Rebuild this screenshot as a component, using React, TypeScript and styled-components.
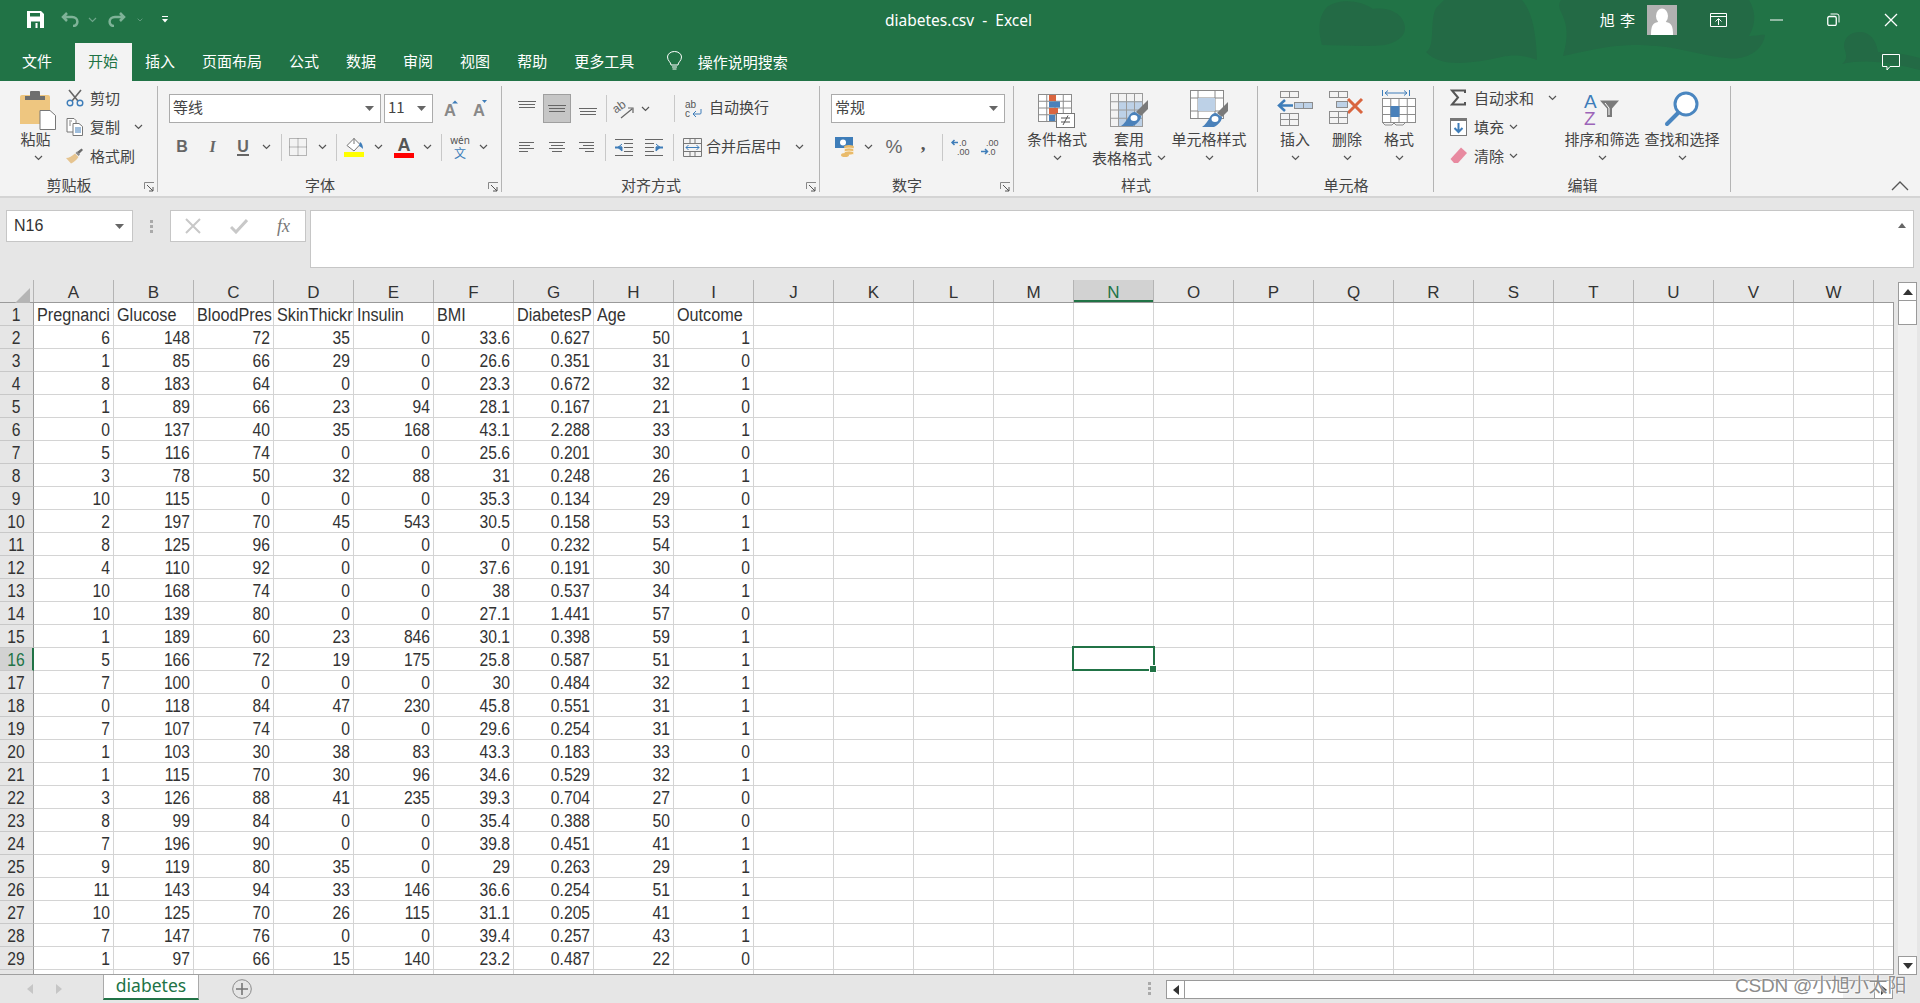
import styled, { createGlobalStyle } from "styled-components";

const Global = createGlobalStyle`
	html, body { margin: 0; padding: 0; background: #e6e6e6; }
	body { width: 1920px; height: 1003px; overflow: hidden; font-family: "Noto Sans CJK SC", "Noto Sans", sans-serif; }
	* { box-sizing: border-box; }
`;

const CELL_FONT = `"Liberation Sans", "Noto Sans CJK SC", sans-serif`;
const COLS = ["A","B","C","D","E","F","G","H","I","J","K","L","M","N","O","P","Q","R","S","T","U","V","W"];
const HEAD = ["Pregnanci","Glucose","BloodPres","SkinThickr","Insulin","BMI","DiabetesP","Age","Outcome"];
const DATA = [
	"6 148 72 35 0 33.6 0.627 50 1","1 85 66 29 0 26.6 0.351 31 0","8 183 64 0 0 23.3 0.672 32 1",
	"1 89 66 23 94 28.1 0.167 21 0","0 137 40 35 168 43.1 2.288 33 1","5 116 74 0 0 25.6 0.201 30 0",
	"3 78 50 32 88 31 0.248 26 1","10 115 0 0 0 35.3 0.134 29 0","2 197 70 45 543 30.5 0.158 53 1",
	"8 125 96 0 0 0 0.232 54 1","4 110 92 0 0 37.6 0.191 30 0","10 168 74 0 0 38 0.537 34 1",
	"10 139 80 0 0 27.1 1.441 57 0","1 189 60 23 846 30.1 0.398 59 1","5 166 72 19 175 25.8 0.587 51 1",
	"7 100 0 0 0 30 0.484 32 1","0 118 84 47 230 45.8 0.551 31 1","7 107 74 0 0 29.6 0.254 31 1",
	"1 103 30 38 83 43.3 0.183 33 0","1 115 70 30 96 34.6 0.529 32 1","3 126 88 41 235 39.3 0.704 27 0",
	"8 99 84 0 0 35.4 0.388 50 0","7 196 90 0 0 39.8 0.451 41 1","9 119 80 35 0 29 0.263 29 1",
	"11 143 94 33 146 36.6 0.254 51 1","10 125 70 26 115 31.1 0.205 41 1","7 147 76 0 0 39.4 0.257 43 1",
	"1 97 66 15 140 23.2 0.487 22 0",
].map((r) => r.split(" "));

function Chevron({ color = "#555" }: { color?: string }) {
	return (
		<svg width="9" height="6" viewBox="0 0 9 6"><path d="M1 1l3.5 3.5L8 1" fill="none" stroke={color} strokeWidth="1.2" /></svg>
	);
}

function Caret() {
	return <svg width="9" height="5" viewBox="0 0 9 5"><path d="M0 0h9L4.5 5z" fill="#666" /></svg>;
}

function Launcher() {
	return (
		<svg width="11" height="11" viewBox="0 0 11 11">
			<path d="M.5 7V.5H10" fill="none" stroke="#888" />
			<path d="M3 3l6 6M9 5v4H5" fill="none" stroke="#555" />
		</svg>
	);
}

function GridLines({ x, y, w, h, cols, rows, color = "#8c8c8c" }: { x: number; y: number; w: number; h: number; cols: number; rows: number; color?: string }) {
	let d = "";
	for (let i = 1; i < cols; i++) d += `M${x + (w * i) / cols} ${y}v${h}`;
	for (let i = 1; i < rows; i++) d += `M${x} ${y + (h * i) / rows}h${w}`;
	return (
		<>
			<rect x={x} y={y} width={w} height={h} fill="none" stroke={color} />
			<path d={d} stroke={color} strokeWidth="1" fill="none" />
		</>
	);
}

function Brush() {
	return (
		<>
			<path d="M39 6l-12 12 5 4 7-7z" fill="#7a7a7a" />
			<path d="M26 18c-3 0-5 2-6 4-2 4-5 8-8 10h12c4-2 8-6 8-10z" fill="#4a81ba" />
			<ellipse cx="25" cy="24" rx="3.5" ry="3" fill="#fff" />
		</>
	);
}

function IconPaste() {
	return (
		<svg width="38" height="40" viewBox="0 0 38 40">
			<path d="M2 5h26a2 2 0 0 1 2 2v27H0V7a2 2 0 0 1 2-2z" fill="#eec680" />
			<path d="M5 6h5V2a1 1 0 0 1 1-1h8a1 1 0 0 1 1 1v4h5v4H5z" fill="#6f6f6f" />
			<path d="M20 20.500h10l5.500 5v14H20z" fill="#fff" stroke="#777" />
		</svg>
	);
}
function IconCut() {
	return (
		<svg width="18" height="18" viewBox="0 0 18 18">
			<path d="M3 1l9 11M15 1L6 12" stroke="#666" strokeWidth="1.6" fill="none" />
			<circle cx="4" cy="14" r="2.800" fill="none" stroke="#3e7db9" strokeWidth="1.400" />
			<circle cx="14" cy="14" r="2.800" fill="none" stroke="#3e7db9" strokeWidth="1.400" />
		</svg>
	);
}
function IconCopy() {
	return (
		<svg width="18" height="18" viewBox="0 0 18 18">
			<path d="M1 .5h7l2 2V14H1z" fill="#fff" stroke="#777" />
			<path d="M7 5.500h6l3.500 3v9H7z" fill="#fff" stroke="#777" />
			<path d="M9 10h6M9 12h6M9 14h6" stroke="#3e7db9" />
			<path d="M3 3h3M3 5h2M3 7h2" stroke="#888" />
		</svg>
	);
}
function IconFormatBrush() {
	return (
		<svg width="18" height="16" viewBox="0 0 18 16">
			<path d="M17 2l-1.500-1.500L11 4l2 2z" fill="#6b6b6b" />
			<path d="M11 3.500l3 3-1.500 1.500-3-3z" fill="#8a8a8a" />
			<path d="M9 5.500l3.500 3.500c-2 3-5 5.500-7.500 6.500L0 10c3 0 6-2 9-4.500z" fill="#e6c48f" />
		</svg>
	);
}
function IconBorders() {
	return (
		<svg width="18" height="18" viewBox="0 0 18 18">
			<path d="M.5.500h17v17H.500zM9 .500v17M.5 9h17" fill="none" stroke="#777" strokeDasharray="1 1" />
		</svg>
	);
}
function IconFill() {
	return (
		<svg width="20" height="20" viewBox="0 0 20 20">
			<path d="M3 8.500L10 1.500l6 6-6 6.500z" fill="#fff" stroke="#777" />
			<path d="M10 1v6" stroke="#777" />
			<path d="M16 5c2 1 3 4 3 7-1-1-2-2-4-3z" fill="#3e7db9" />
			<rect y="15" width="20" height="5" fill="#ffff00" />
		</svg>
	);
}
function IconFontSize({ up }: { up?: boolean }) {
	return (
		<IconSvg width="20" height="18" viewBox="0 0 20 18">
			<text x={up ? 6 : 5} y="15.500" fontSize="16.500" fontWeight="700" fontFamily="Liberation Sans, sans-serif" fill="#888">A</text>
			{up ? <path d="M14 3.500l3-3 3 3z" fill="#3e7db9" /> : <path d="M14 0h5l-2.500 3z" fill="#3e7db9" />}
		</IconSvg>
	);
}
function IconAlignV({ top }: { top: number }) {
	return (
		<svg width="18" height="18" viewBox="0 0 18 18">
			<path d={`M0 ${top}.5h18M1 ${top + 3}.5h16M1 ${top + 6}.5h16`} stroke="#666" />
		</svg>
	);
}
function IconAlignH({ mode }: { mode: "l" | "c" | "r" }) {
	const xs = mode === "l" ? [0, 0, 0, 0] : mode === "c" ? [0, 2, 0, 3] : [0, 4, 0, 6];
	const ws = mode === "c" ? [16, 12, 16, 10] : [15, 11, 15, 9];
	return (
		<svg width="16" height="12" viewBox="0 0 16 12">
			{[0, 1, 2, 3].map((i) => <path key={i} d={`M${xs[i]} ${i * 3 + 1}.5h${ws[i]}`} stroke="#666" />)}
		</svg>
	);
}
function IconIndent({ flip }: { flip?: boolean }) {
	return (
		<svg width="18" height="17" viewBox="0 0 18 17" style={flip ? { transform: "scaleX(-1)" } : undefined}>
			<path d="M0 .500h18M9 4.500h9M9 8.500h9M9 12.500h9M0 16.500h18" stroke="#666" />
			<path d="M7 5L3 8.500 7 12V9.500h-0V8H3" fill="#3e7db9" stroke="#3e7db9" />
			<path d="M0 8.500h7" stroke="#3e7db9" strokeWidth="2" />
		</svg>
	);
}
function IconOrient() {
	return (
		<IconSvg width="22" height="22" viewBox="0 0 22 22">
			<text x="1" y="12" fontSize="12" fontFamily="Liberation Sans, sans-serif" fill="#666" transform="rotate(-35 8 11)">ab</text>
			<path d="M8 20l11-9M15 10h5v5" fill="none" stroke="#666" strokeWidth="1.200" />
		</IconSvg>
	);
}
function IconWrap() {
	return (
		<IconSvg width="18" height="18" viewBox="0 0 18 18">
			<text x="0" y="8" fontSize="10" fontFamily="Liberation Sans, sans-serif" fill="#555">ab</text>
			<text x="0" y="17" fontSize="10" fontFamily="Liberation Sans, sans-serif" fill="#555">c</text>
			<path d="M16 9v4a1 1 0 0 1-1 1H8M11 11l-3 3 3 3" fill="none" stroke="#3e7db9" />
		</IconSvg>
	);
}
function IconMerge() {
	return (
		<svg width="19" height="19" viewBox="0 0 19 19">
			<path d="M.5.500h18v18H.500zM.5 5.500h18M.5 13.500h18M7 .500v5M12 .500v5M7 13.500v5M12 13.500v5" fill="none" stroke="#777" />
			<path d="M3 9.500h13M5.500 7L3 9.500 5.500 12M13.500 7L16 9.500 13.500 12" fill="none" stroke="#3e7db9" />
		</svg>
	);
}
function IconCurrency() {
	return (
		<svg width="20" height="20" viewBox="0 0 20 20">
			<rect x="0" y="0" width="18" height="11" fill="#3e7db9" />
			<circle cx="8" cy="5.500" r="3" fill="#fff" />
			<ellipse cx="14" cy="10" rx="5" ry="2" fill="#e9bb6b" />
			<ellipse cx="14" cy="13" rx="5" ry="2" fill="#e9bb6b" stroke="#fff" strokeWidth=".6" />
			<ellipse cx="14" cy="16" rx="5" ry="2" fill="#e9bb6b" stroke="#fff" strokeWidth=".6" />
			<ellipse cx="10" cy="18" rx="4" ry="2" fill="#e9bb6b" />
		</svg>
	);
}
function IconDecimal({ more }: { more?: boolean }) {
	const f = { fontSize: 9, fontFamily: "Liberation Sans, sans-serif", fill: "#555" };
	return (
		<IconSvg width="18" height="18" viewBox="0 0 18 18">
			<text x={more ? 5 : 7} y="8" {...f}>{more ? ".00" : ".0"}</text>
			<text x={more ? 7 : 5} y="17" {...f}>{more ? ".0" : ".00"}</text>
			{more ? <path d="M0 13.500h6M4 11l2.500 2.500L4 16" stroke="#3e7db9" strokeWidth="1.500" fill="none" /> : <path d="M0 4.500h6M2.500 2L0 4.500 2.500 7" stroke="#3e7db9" strokeWidth="1.500" fill="none" />}
		</IconSvg>
	);
}
function IconConditional() {
	return (
		<svg width="38" height="35" viewBox="0 0 38 35">
			<rect x=".5" y=".5" width="33" height="27" fill="#fff" />
			<GridLines x={0.5} y={0.5} w={33} h={27} cols={4} rows={4} />
			<rect x="11" y="1" width="7" height="6" fill="#d9653f" />
			<rect x="11" y="7.500" width="11" height="6" fill="#4a81ba" />
			<rect x="11" y="14" width="9" height="6" fill="#d9653f" />
			<rect x="11" y="21" width="6" height="6" fill="#4a81ba" />
			<rect x="18.500" y="19.500" width="18" height="14" fill="#fff" stroke="#777" />
			<path d="M23 24h9M23 28h9M30 21.500L25 31" stroke="#555" />
		</svg>
	);
}
function IconTableFormat() {
	return (
		<svg width="38" height="35" viewBox="0 0 38 35">
			<rect x="8" y="8" width="25" height="25" fill="#bdd1e7" />
			<GridLines x={0.5} y={0.5} w={32} h={33} cols={4} rows={4} color="#9a9a9a" />
			<g transform="translate(-1 1)"><Brush /></g>
		</svg>
	);
}
function IconCellStyle() {
	return (
		<svg width="38" height="38" viewBox="0 0 38 38">
			<rect x=".5" y=".5" width="33" height="28" fill="#fff" stroke="#888" />
			<path d="M8 .5v28M25 .5v28M.5 8h33M.5 21h33" stroke="#888" fill="none" />
			<rect x="8" y="8" width="17" height="13" fill="#bdd1e7" />
			<g transform="translate(0 5)"><Brush /></g>
		</svg>
	);
}
function IconInsert() {
	return (
		<svg width="37" height="36" viewBox="0 0 37 36">
			<GridLines x={3.5} y={0.5} w={18} h={6} cols={2} rows={1} />
			<rect x="17.500" y="11.500" width="18" height="6" fill="#bdd1e7" />
			<GridLines x={17.5} y={11.5} w={18} h={6} cols={2} rows={1} />
			<path d="M16 14.500H3M8 9l-6 5.500L8 20" fill="none" stroke="#3e7db9" strokeWidth="2.500" />
			<GridLines x={3.5} y={22.5} w={18} h={12} cols={2} rows={2} />
		</svg>
	);
}
function IconDelete() {
	return (
		<svg width="36" height="33" viewBox="0 0 36 33">
			<GridLines x={0.5} y={0.5} w={18} h={6} cols={2} rows={1} />
			<rect x="7.500" y="10.500" width="11" height="6" fill="#bdd1e7" stroke="#8c8c8c" />
			<path d="M19 8l14 14M33 8L19 22" stroke="#d9653f" strokeWidth="3" />
			<GridLines x={0.5} y={20.5} w={18} h={12} cols={2} rows={2} />
		</svg>
	);
}
function IconFormat() {
	return (
		<svg width="35" height="36" viewBox="0 0 35 36">
			<path d="M.5 0v6M27.500 0v6M3 3h22M6 .500L3 3l3 2.500M22 .500L25 3l-3 2.500" fill="none" stroke="#3e7db9" />
			<rect x=".5" y="8.500" width="33" height="24" fill="#fff" />
			<GridLines x={0.5} y={8.5} w={33} h={24} cols={4} rows={3} />
			<rect x="8.500" y="16" width="9" height="11" fill="#4a81ba" />
			<path d="M1 33l2 2h7l2-2 2 2h7l2-2" fill="none" stroke="#8c8c8c" />
		</svg>
	);
}
function IconSort() {
	return (
		<IconSvg width="36" height="34" viewBox="0 0 36 34">
			<text x="0" y="16" fontSize="19" fontFamily="Liberation Sans, sans-serif" fill="#3e7db9">A</text>
			<text x="0" y="33" fontSize="19" fontFamily="Liberation Sans, sans-serif" fill="#9c64b8">Z</text>
			<path d="M16 8.500h19l-7 8V25h-5v-8.500z" fill="#7a7a7a" />
			<path d="M21 11l4 5v7" fill="none" stroke="#fff" />
		</IconSvg>
	);
}
function IconFind() {
	return (
		<svg width="36" height="36" viewBox="0 0 36 36">
			<circle cx="22" cy="13" r="11" fill="#fff" stroke="#4a86c0" strokeWidth="3" />
			<path d="M14 22L3 33" stroke="#4a86c0" strokeWidth="4" strokeLinecap="round" />
		</svg>
	);
}
function IconSum() {
	return (
		<svg width="16" height="17" viewBox="0 0 16 17">
			<path d="M15 4V1.500H2l6 7-6 7h13V13" fill="none" stroke="#555" strokeWidth="2" />
		</svg>
	);
}
function IconFillDown() {
	return (
		<svg width="17" height="18" viewBox="0 0 17 18">
			<rect x=".5" y=".5" width="16" height="17" fill="#fff" stroke="#777" />
			<rect width="17" height="3" fill="#777" />
			<path d="M8.500 5v9M4.500 10l4 4 4-4" fill="none" stroke="#3e7db9" strokeWidth="2" />
		</svg>
	);
}
function IconEraser() {
	return (
		<svg width="17" height="17" viewBox="0 0 17 17">
			<path d="M11 .5l6 5.500-9 10H4L.5 12z" fill="#e88aa0" />
		</svg>
	);
}

const App = () => (
	<Window>
		<Global />
		<TitleBar>
			<Blobs viewBox="0 0 1920 81" aria-hidden>
				<path fill="#236a45" d="M1322 45c-4-14-4-28 5-38 12-9 34-7 46 2 12-2 30 2 32 18 1 10-10 16-20 18-20 2-42 0-63 0z" />
				<path fill="#236a45" d="M1426 52c10-6 3-30 10-44l8-8h78c12 14 14 38 15 60-20-8-32-4-50 0-24 4-48 6-61-8z" />
				<path fill="#236a45" d="M1563 56c12-40-10-44-2-56h188c6 10 8 22 0 36 6 0 14-2 16-1-2 16-20 26-38 23-26-2-44-10-70-12-32-3-50 0-94 10z" />
				<path fill="#236a45" d="M1842 64c8-6 2-14 2-18 0-8 6-14 16-14 10 0 16 8 18 20 14 0 28 2 42 6v12c-24-6-52-12-78-6z" />
			</Blobs>
			<TopRow>
				<QuickBar>
					<QuickCell $w={36}>
						<svg width="17" height="17" viewBox="0 0 17 17">
							<path d="M0 0h14l3 3v14H0z" fill="#fff" />
							<rect x="3" y="2" width="10" height="3.500" fill="#217346" />
							<rect x="4" y="10.500" width="9" height="6.500" fill="#217346" />
							<rect x="8.500" y="12" width="2" height="5" fill="#fff" />
						</svg>
					</QuickCell>
					<QuickCell $w={34}>
						<svg width="18" height="15" viewBox="0 0 18 15"><path d="M6 1L2 5l4 4M2 5h9c7 0 7 9 1 9" fill="none" stroke="#7fb398" strokeWidth="2.500" /></svg>
					</QuickCell>
					<QuickCell $w={10}><Chevron color="#6ea58a" /></QuickCell>
					<QuickCell $w={40}>
						<svg width="18" height="15" viewBox="0 0 18 15"><path d="M12 1l4 4-4 4M16 5H7c-7 0-7 9-1 9" fill="none" stroke="#7fb398" strokeWidth="2.500" /></svg>
					</QuickCell>
					<QuickCell $w={6}><Chevron color="#6ea58a" /></QuickCell>
					<QuickCell $w={44}>
						<svg width="6" height="7" viewBox="0 0 6 7"><path d="M0 .5h6" stroke="#fff" /><path d="M0 3h6L3 6.500z" fill="#fff" /></svg>
					</QuickCell>
				</QuickBar>
				<DocTitle>diabetes.csv&nbsp; -&nbsp; Excel</DocTitle>
				<Account>
					<UserName>旭 李</UserName>
					<Avatar>
						<svg width="30" height="30" viewBox="0 0 30 30">
							<ellipse cx="15" cy="11" rx="6" ry="7.500" fill="#fff" />
							<path d="M4 30c0-10 2-12 7-13h8c5 1 7 3 7 13z" fill="#fff" />
						</svg>
					</Avatar>
					<WinButton>
						<svg width="17" height="14" viewBox="0 0 17 14">
							<path d="M.5.500h16v13H.500zM.5 3.500h16M8.500 12V6M5.500 8.500l3-3 3 3" fill="none" stroke="#fff" />
						</svg>
					</WinButton>
					<WinButton>
						<svg width="13" height="2" viewBox="0 0 13 2"><path d="M0 1h13" stroke="#fff" /></svg>
					</WinButton>
					<WinButton>
						<svg width="13" height="13" viewBox="0 0 13 13">
							<rect x=".75" y="3.500" width="8.500" height="9" rx="1.500" fill="none" stroke="#fff" strokeWidth="1.300" />
							<path d="M3.500 1h6.500a2 2 0 0 1 2 2v6.500" fill="none" stroke="#fff" />
						</svg>
					</WinButton>
					<WinButton>
						<svg width="14" height="14" viewBox="0 0 14 14"><path d="M1 1l12 12M13 1L1 13" stroke="#fff" strokeWidth="1.300" /></svg>
					</WinButton>
				</Account>
			</TopRow>
			<TabRow>
				<Tab $gap>文件</Tab>
				<Tab $active>开始</Tab>
				<Tab>插入</Tab>
				<Tab>页面布局</Tab>
				<Tab>公式</Tab>
				<Tab>数据</Tab>
				<Tab>审阅</Tab>
				<Tab>视图</Tab>
				<Tab>帮助</Tab>
				<Tab>更多工具</Tab>
				<SearchHint>
					<svg width="15" height="20" viewBox="0 0 15 20">
						<path d="M4 14c0-3-3.500-4-3.500-8a7 5.500 0 0 1 14 0c0 4-3.500 5-3.500 8z" fill="none" stroke="#fff" />
						<path d="M5 16h5M5.500 18h4" stroke="#fff" />
					</svg>
					<span>操作说明搜索</span>
				</SearchHint>
				<CommentButton>
					<svg width="18" height="17" viewBox="0 0 18 17"><path d="M.5.500h17v12H8l-3 3.500v-3.500H.500z" fill="none" stroke="#fff" /></svg>
				</CommentButton>
			</TabRow>
		</TitleBar>

		<Ribbon>
			<Group $w={158}>
				<GroupBody $pl={20}>
					<BigButton $w={37}>
						<BigIcon $pt={5}><IconPaste /></BigIcon>
						<BigLabel $shift={-3}>粘贴</BigLabel>
						<BigChevron><Chevron /></BigChevron>
					</BigButton>
					<SmallColumn $ml={9}>
						<SmallRow><SmallIcon><IconCut /></SmallIcon>剪切</SmallRow>
						<SmallRow><SmallIcon><IconCopy /></SmallIcon>复制<RowChevron $ml={14}><Chevron /></RowChevron></SmallRow>
						<SmallRow><SmallIcon><IconFormatBrush /></SmallIcon>格式刷</SmallRow>
					</SmallColumn>
				</GroupBody>
				<GroupFoot><FootLabel>剪贴板</FootLabel><LauncherCell><Launcher /></LauncherCell></GroupFoot>
			</Group>

			<Group $w={344}>
				<StackedBody $pl={11}>
					<ToolRow>
						<ComboBox $w={212}><ComboText>等线</ComboText><Caret /></ComboBox>
						<ComboBox $w={49} $ml={3}><ComboText>11</ComboText><Caret /></ComboBox>
						<Tool $w={30}><IconFontSize up /></Tool>
						<Tool $w={30}><IconFontSize /></Tool>
					</ToolRow>
					<ToolRowLow $ml={-2}>
						<Tool $w={30}><StyleB>B</StyleB></Tool>
						<Tool $w={31}><StyleI>I</StyleI></Tool>
						<Tool $w={30}><StyleU>U</StyleU></Tool>
						<Tool $w={16}><Chevron /></Tool>
						<ToolSep $ml={7} />
						<Tool $w={32}><IconBorders /></Tool>
						<Tool $w={16}><Chevron /></Tool>
						<ToolSep $ml={6} />
						<Tool $w={33}><IconFill /></Tool>
						<Tool $w={16}><Chevron /></Tool>
						<Tool $w={36}>
							<ColorA>A<ColorLine /></ColorA>
						</Tool>
						<Tool $w={10}><Chevron /></Tool>
						<ToolSep $ml={9} />
						<Tool $w={36}><Phonetic>wén<b>文</b></Phonetic></Tool>
						<Tool $w={10}><Chevron /></Tool>
					</ToolRowLow>
				</StackedBody>
				<GroupFoot><FootLabel>字体</FootLabel><LauncherCell><Launcher /></LauncherCell></GroupFoot>
			</Group>

			<Group $w={318}>
				<StackedBody $pl={11}>
					<ToolRow>
						<Tool $w={28}><IconAlignV top={1} /></Tool>
						<ActiveTool $ml={2}><IconAlignV top={5} /></ActiveTool>
						<Tool $w={30} $ml={2}><IconAlignV top={8} /></Tool>
						<ToolSep $ml={3} />
						<Tool $w={33}><IconOrient /></Tool>
						<Tool $w={10}><Chevron /></Tool>
						<ToolSep $ml={24} />
						<Tool $w={30} $ml={4}><IconWrap /></Tool>
						<ToolText>自动换行</ToolText>
					</ToolRow>
					<ToolRowLow $ml={-1}>
						<Tool $w={30}><IconAlignH mode="l" /></Tool>
						<Tool $w={30}><IconAlignH mode="c" /></Tool>
						<Tool $w={30}><IconAlignH mode="r" /></Tool>
						<ToolSep $ml={3} />
						<Tool $w={36}><IconIndent /></Tool>
						<Tool $w={24}><IconIndent flip /></Tool>
						<ToolSep $ml={7} />
						<Tool $w={28} $ml={4}><IconMerge /></Tool>
						<ToolText>合并后居中</ToolText>
						<Tool $w={10} $ml={13}><Chevron /></Tool>
					</ToolRowLow>
				</StackedBody>
				<GroupFoot><FootLabel>对齐方式</FootLabel><LauncherCell><Launcher /></LauncherCell></GroupFoot>
			</Group>

			<Group $w={194}>
				<StackedBody $pl={11}>
					<ToolRow>
						<ComboBox $w={174}><ComboText>常规</ComboText><Caret /></ComboBox>
					</ToolRow>
					<ToolRowLow>
						<Tool $w={28}><IconCurrency /></Tool>
						<Tool $w={10} $ml={4}><Chevron /></Tool>
						<Tool $w={42}><Percent>%</Percent></Tool>
						<Tool $w={16}><Comma>,</Comma></Tool>
						<ToolSep $ml={11} />
						<Tool $w={36}><IconDecimal /></Tool>
						<Tool $w={22}><IconDecimal more /></Tool>
					</ToolRowLow>
				</StackedBody>
				<GroupFoot><FootLabel>数字</FootLabel><LauncherCell><Launcher /></LauncherCell></GroupFoot>
			</Group>

			<Group $w={244}>
				<GroupBody $pl={6}>
					<BigButton $w={74}>
						<BigIcon $pt={9}><IconConditional /></BigIcon>
						<BigLabel>条件格式</BigLabel>
						<BigChevron><Chevron /></BigChevron>
					</BigButton>
					<BigButton $w={70}>
						<BigIcon $pt={8}><IconTableFormat /></BigIcon>
						<BigLabel>套用</BigLabel>
						<BigLabel>表格格式<RowChevron $ml={5}><Chevron /></RowChevron></BigLabel>
					</BigButton>
					<BigButton $w={90}>
						<BigIcon $pt={5}><IconCellStyle /></BigIcon>
						<BigLabel>单元格样式</BigLabel>
						<BigChevron><Chevron /></BigChevron>
					</BigButton>
				</GroupBody>
				<GroupFoot><FootLabel>样式</FootLabel></GroupFoot>
			</Group>

			<Group $w={176}>
				<GroupBody $pl={11}>
					<BigButton $w={52}>
						<BigIcon $pt={6}><IconInsert /></BigIcon>
						<BigLabel>插入</BigLabel>
						<BigChevron><Chevron /></BigChevron>
					</BigButton>
					<BigButton $w={52}>
						<BigIcon $pt={6}><IconDelete /></BigIcon>
						<BigLabel>删除</BigLabel>
						<BigChevron><Chevron /></BigChevron>
					</BigButton>
					<BigButton $w={52}>
						<BigIcon $pt={5}><IconFormat /></BigIcon>
						<BigLabel>格式</BigLabel>
						<BigChevron><Chevron /></BigChevron>
					</BigButton>
				</GroupBody>
				<GroupFoot><FootLabel>单元格</FootLabel></GroupFoot>
			</Group>

			<Group $w={297}>
				<GroupBody $pl={16}>
					<SmallColumn $w={112}>
						<SmallRow><SmallIcon><IconSum /></SmallIcon>自动求和<RowChevron $ml={14}><Chevron /></RowChevron></SmallRow>
						<SmallRow><SmallIcon><IconFillDown /></SmallIcon>填充<RowChevron $ml={5}><Chevron /></RowChevron></SmallRow>
						<SmallRow><SmallIcon><IconEraser /></SmallIcon>清除<RowChevron $ml={5}><Chevron /></RowChevron></SmallRow>
					</SmallColumn>
					<BigButton $w={80}>
						<BigIcon $pt={7}><IconSort /></BigIcon>
						<BigLabel>排序和筛选</BigLabel>
						<BigChevron><Chevron /></BigChevron>
					</BigButton>
					<BigButton $w={80}>
						<BigIcon $pt={6}><IconFind /></BigIcon>
						<BigLabel>查找和选择</BigLabel>
						<BigChevron><Chevron /></BigChevron>
					</BigButton>
				</GroupBody>
				<GroupFoot><FootLabel>编辑</FootLabel></GroupFoot>
			</Group>

			<RibbonEnd>
				<svg width="18" height="10" viewBox="0 0 18 10"><path d="M1 9l8-8 8 8" fill="none" stroke="#555" strokeWidth="1.300" /></svg>
			</RibbonEnd>
		</Ribbon>

		<FormulaBar>
			<NameBox>N16<Caret /></NameBox>
			<GripDots><i /><i /><i /></GripDots>
			<FormulaButtons>
				<svg width="16" height="16" viewBox="0 0 16 16"><path d="M1 1l14 14M15 1L1 15" stroke="#c8c8c8" strokeWidth="2" /></svg>
				<svg width="18" height="15" viewBox="0 0 18 15"><path d="M1 8l5 5L17 1" fill="none" stroke="#c8c8c8" strokeWidth="3" /></svg>
				<FxLabel>fx</FxLabel>
			</FormulaButtons>
			<FormulaInput>
				<svg width="8" height="5" viewBox="0 0 8 5"><path d="M4 0l4 5H0z" fill="#666" /></svg>
			</FormulaInput>
		</FormulaBar>

		<SheetArea>
			<GridPane>
				<ColumnHeader>
					<Corner>
						<svg width="15" height="15" viewBox="0 0 15 15"><path d="M15 0v15H0z" fill="#b5b5b5" /></svg>
					</Corner>
					{COLS.map((c) => <ColHead key={c} $active={c === "N"}>{c}</ColHead>)}
					<ColTail />
				</ColumnHeader>
				<RowsPane>
					<Row>
						<RowHead><RowText>1</RowText></RowHead>
						{COLS.map((c, i) => <Cell key={c}>{HEAD[i] && <HeadText>{HEAD[i]}</HeadText>}</Cell>)}
						<TailCell />
					</Row>
					{DATA.map((values, r) => (
						<Row key={r}>
							<RowHead $active={r + 2 === 16}><RowText>{r + 2}</RowText></RowHead>
							{COLS.map((c, i) => (
								<Cell key={c} $num>
									{values[i] && <NumText>{values[i]}</NumText>}
									{c === "N" && r + 2 === 16 && <Selection><FillHandle /></Selection>}
								</Cell>
							))}
							<TailCell />
						</Row>
					))}
					<Row>
						<RowHead />
						{COLS.map((c) => <Cell key={c} />)}
						<TailCell />
					</Row>
				</RowsPane>
			</GridPane>
			<VScroll>
				<ScrollButton>
					<svg width="10" height="6" viewBox="0 0 10 6"><path d="M5 0l5 6H0z" fill="#333" /></svg>
				</ScrollButton>
				<VThumb />
				<VTrack />
				<ScrollButton>
					<svg width="10" height="6" viewBox="0 0 10 6"><path d="M5 6l5-6H0z" fill="#333" /></svg>
				</ScrollButton>
			</VScroll>
		</SheetArea>

		<BottomBar>
			<SheetNav>
				<svg width="6" height="10" viewBox="0 0 6 10"><path d="M6 0v10L0 5z" fill="#c6c6c6" /></svg>
				<svg width="6" height="10" viewBox="0 0 6 10"><path d="M0 0v10l6-5z" fill="#c6c6c6" /></svg>
			</SheetNav>
			<SheetTab>diabetes</SheetTab>
			<AddSheet>
				<svg width="20" height="20" viewBox="0 0 20 20">
					<circle cx="10" cy="10" r="9.300" fill="none" stroke="#8a8a8a" />
					<path d="M10 4v12M4 10h12" stroke="#777" strokeWidth="1.600" />
				</svg>
			</AddSheet>
			<BarGrip><i /><i /><i /></BarGrip>
			<HScroll>
				<HButton>
					<svg width="6" height="10" viewBox="0 0 6 10"><path d="M6 0v10L0 5z" fill="#333" /></svg>
				</HButton>
				<HThumb />
				<HTrack />
				<HButton>
					<svg width="6" height="10" viewBox="0 0 6 10"><path d="M0 0v10l6-5z" fill="#333" /></svg>
				</HButton>
			</HScroll>
			<Watermark>CSDN @小旭小太阳</Watermark>
		</BottomBar>
	</Window>
);

export default App;

const IconSvg = styled.svg`
	overflow: visible;
`;

const Window = styled.div`
	width: 1920px;
	height: 1003px;
	display: flex;
	flex-direction: column;
	background: #e6e6e6;
	overflow: hidden;
`;

const TitleBar = styled.div`
	position: relative;
	height: 81px;
	flex: none;
	background: #217346;
	color: #fff;
`;

const Blobs = styled.svg`
	position: absolute;
	inset: 0;
	width: 1920px;
	height: 81px;
`;

const TopRow = styled.div`
	position: relative;
	height: 43px;
	padding-bottom: 4px;
	display: flex;
	align-items: center;
`;

const QuickBar = styled.div`
	width: 885px;
	display: flex;
	align-items: center;
	padding-left: 17px;
`;

const QuickCell = styled.div<{ $w: number }>`
	width: ${(p) => p.$w}px;
	flex: none;
	display: flex;
	justify-content: center;
`;

const DocTitle = styled.div`
	font-family: "Noto Sans", sans-serif;
	font-size: 15.500px;
	white-space: nowrap;
`;

const Account = styled.div`
	margin-left: auto;
	display: flex;
	align-items: center;
`;

const UserName = styled.div`
	font-size: 15px;
	word-spacing: 2px;
	margin-right: 12px;
`;

const Avatar = styled.div`
	width: 30px;
	height: 30px;
	background: #b1b1b1;
	margin-right: 13px;
	overflow: hidden;
	display: flex;
`;

const WinButton = styled.div`
	width: 57.500px;
	height: 38px;
	display: flex;
	align-items: center;
	justify-content: center;
`;

const TabRow = styled.div`
	position: relative;
	height: 38px;
	display: flex;
	align-items: stretch;
	padding-left: 8.500px;
	font-size: 15px;
`;

const Tab = styled.div<{ $active?: boolean; $gap?: boolean }>`
	padding: 0 13.500px 3px;
	display: flex;
	align-items: center;
	white-space: nowrap;
	margin-right: ${(p) => (p.$gap ? 9 : 0)}px;
	background: ${(p) => (p.$active ? "#f3f3f3" : "transparent")};
	color: ${(p) => (p.$active ? "#217346" : "#fff")};
`;

const SearchHint = styled.div`
	margin-left: 19px;
	padding-bottom: 2px;
	display: flex;
	align-items: center;
	gap: 16px;
	font-size: 15px;
`;

const CommentButton = styled.div`
	margin-left: auto;
	width: 58px;
	display: flex;
	align-items: center;
	justify-content: center;
`;

const Ribbon = styled.div`
	height: 117px;
	flex: none;
	display: flex;
	background: #f3f3f3;
	border-bottom: 2px solid #d4d4d4;
	color: #444;
	font-size: 15px;
`;

const Group = styled.div<{ $w: number }>`
	position: relative;
	width: ${(p) => p.$w}px;
	display: flex;
	flex-direction: column;
	&::after {
		content: "";
		position: absolute;
		right: 0;
		top: 5px;
		bottom: 4px;
		width: 1px;
		background: #b4b4b4;
	}
`;

const GroupBody = styled.div<{ $pl: number }>`
	flex: 1;
	display: flex;
	padding: 4px 0 0 ${(p) => p.$pl}px;
	min-height: 0;
`;

const StackedBody = styled.div<{ $pl: number }>`
	flex: 1;
	display: flex;
	flex-direction: column;
	padding: 13px 0 0 ${(p) => p.$pl}px;
`;

const GroupFoot = styled.div`
	height: 22px;
	flex: none;
	display: flex;
	align-items: center;
`;

const FootLabel = styled.div`
	flex: 1;
	text-align: center;
	line-height: 22px;
`;

const LauncherCell = styled.div`
	width: 20px;
	display: flex;
	padding: 4px 0 0 6px;
`;

const BigButton = styled.div<{ $w: number }>`
	width: ${(p) => p.$w}px;
	display: flex;
	flex-direction: column;
	align-items: center;
`;

const BigIcon = styled.div<{ $pt: number }>`
	height: 44px;
	flex: none;
	padding-top: ${(p) => p.$pt}px;
	display: flex;
	justify-content: center;
	align-items: flex-start;
`;

const BigLabel = styled.div<{ $shift?: number }>`
	height: 19px;
	line-height: 19px;
	flex: none;
	white-space: nowrap;
	display: flex;
	align-items: center;
	margin-left: ${(p) => (p.$shift ?? 0) * 2}px;
`;

const BigChevron = styled.div`
	height: 19px;
	flex: none;
	display: flex;
	align-items: center;
	justify-content: center;
`;

const SmallColumn = styled.div<{ $ml?: number; $w?: number }>`
	display: flex;
	flex-direction: column;
	margin: -2px 0 0 ${(p) => p.$ml ?? 0}px;
	width: ${(p) => (p.$w ? `${p.$w}px` : "auto")};
`;

const SmallRow = styled.div`
	height: 29px;
	display: flex;
	align-items: center;
	white-space: nowrap;
`;

const SmallIcon = styled.div`
	width: 24px;
	display: flex;
	justify-content: flex-start;
`;

const RowChevron = styled.span<{ $ml: number }>`
	margin-left: ${(p) => p.$ml}px;
	display: inline-flex;
`;

const ToolRow = styled.div`
	height: 29px;
	flex: none;
	display: flex;
	align-items: center;
`;

const ToolRowLow = styled(ToolRow)<{ $ml?: number }>`
	height: 26px;
	margin-top: 11px;
	margin-left: ${(p) => p.$ml ?? 0}px;
`;

const ComboBox = styled.div<{ $w: number; $ml?: number }>`
	width: ${(p) => p.$w}px;
	height: 29px;
	flex: none;
	margin-left: ${(p) => p.$ml ?? 0}px;
	padding: 0 6px 0 3px;
	background: #fff;
	border: 1px solid #ababab;
	display: flex;
	align-items: center;
	justify-content: space-between;
	color: #444;
`;

const ComboText = styled.span`
	line-height: 24px;
	margin-bottom: 3px;
`;

const Tool = styled.div<{ $w: number; $ml?: number }>`
	width: ${(p) => p.$w}px;
	margin-left: ${(p) => p.$ml ?? 0}px;
	height: 26px;
	flex: none;
	display: flex;
	align-items: center;
	justify-content: center;
`;

const ActiveTool = styled.div<{ $ml: number }>`
	width: 28px;
	height: 29px;
	flex: none;
	margin-left: ${(p) => p.$ml}px;
	background: #c6c6c6;
	border: 1px solid #9f9f9f;
	display: flex;
	align-items: center;
	justify-content: center;
`;

const ToolSep = styled.div<{ $ml: number }>`
	width: 1px;
	height: 27px;
	flex: none;
	margin-left: ${(p) => p.$ml}px;
	background: #c8c8c8;
`;

const ToolText = styled.div`
	white-space: nowrap;
	line-height: 22px;
	margin-bottom: 3px;
`;

const StyleB = styled.span`
	font: 700 16px "Liberation Sans", sans-serif;
	color: #666;
`;

const StyleI = styled.span`
	font: italic 700 16px "Liberation Serif", serif;
	color: #666;
`;

const StyleU = styled.span`
	font: 700 16px "Liberation Sans", sans-serif;
	color: #666;
	border-bottom: 2px solid #666;
	line-height: 15px;
`;

const ColorA = styled.span`
	display: flex;
	flex-direction: column;
	align-items: center;
	font: 700 18px/16px "Liberation Sans", sans-serif;
	color: #555;
`;

const ColorLine = styled.i`
	display: block;
	width: 20px;
	height: 5px;
	background: #ff0000;
`;

const Phonetic = styled.span`
	display: flex;
	flex-direction: column;
	align-items: center;
	font: 10px/11px "Noto Sans", sans-serif;
	color: #555;
	b {
		font: 12px/13px "Noto Sans CJK SC", sans-serif;
		color: #3e7db9;
	}
`;

const Percent = styled.span`
	font: 19px "Liberation Sans", sans-serif;
	color: #666;
`;

const Comma = styled.span`
	font: 700 19px/14px "Liberation Serif", serif;
	color: #555;
	margin-bottom: 7px;
`;

const RibbonEnd = styled.div`
	flex: 1;
	display: flex;
	align-items: flex-end;
	justify-content: flex-end;
	padding: 0 11px 5px 0;
`;

const FormulaBar = styled.div`
	height: 82px;
	flex: none;
	display: flex;
	align-items: flex-start;
	padding: 12px 6px 0 6px;
`;

const NameBox = styled.div`
	width: 127px;
	height: 32px;
	background: #fff;
	border: 1px solid #c6c6c6;
	padding: 0 8px 0 7px;
	display: flex;
	align-items: center;
	justify-content: space-between;
	font: 16px ${CELL_FONT};
	color: #333;
`;

const GripDots = styled.div`
	width: 37px;
	height: 32px;
	display: flex;
	flex-direction: column;
	align-items: center;
	justify-content: center;
	gap: 2px;
	i {
		width: 3px;
		height: 3px;
		background: #aaa;
	}
`;

const FormulaButtons = styled.div`
	width: 136px;
	height: 32px;
	background: #fff;
	border: 1px solid #c6c6c6;
	display: flex;
	align-items: center;
	justify-content: space-between;
	padding: 0 15px 0 14px;
`;

const FxLabel = styled.span`
	font: italic 400 18px "Liberation Serif", serif;
	color: #777;
`;

const FormulaInput = styled.div`
	width: 1604px;
	height: 58px;
	margin-left: 4px;
	background: #fff;
	border: 1px solid #c6c6c6;
	display: flex;
	justify-content: flex-end;
	padding: 12px 7px 0 0;
`;

const SheetArea = styled.div`
	height: 695px;
	flex: none;
	display: flex;
`;

const GridPane = styled.div`
	width: 1894px;
	display: flex;
	flex-direction: column;
	border-bottom: 1px solid #a0a0a0;
`;

const ColumnHeader = styled.div`
	height: 23px;
	flex: none;
	display: flex;
	border-bottom: 1px solid #9a9a9a;
	font: 17px/26px ${CELL_FONT};
	color: #333;
`;

const Corner = styled.div`
	width: 34px;
	flex: none;
	border-right: 1px solid #b4b4b4;
	padding: 5px 0 0 15px;
`;

const ColHead = styled.div<{ $active?: boolean }>`
	width: 80px;
	flex: none;
	text-align: center;
	border-right: 1px solid #b4b4b4;
	background: ${(p) => (p.$active ? "#d2d2d2" : "transparent")};
	color: ${(p) => (p.$active ? "#217346" : "#333")};
	box-shadow: ${(p) => (p.$active ? "inset 0 -2px 0 #217346" : "none")};
`;

const ColTail = styled.div`
	flex: 1;
`;

const RowsPane = styled.div`
	flex: 1;
	min-height: 0;
	overflow: hidden;
	background: #fff;
	border-right: 1px solid #9a9a9a;
`;

const Row = styled.div`
	height: 23px;
	display: flex;
	font: 18px/24px ${CELL_FONT};
	color: #333;
`;

const RowHead = styled.div<{ $active?: boolean }>`
	width: 34px;
	flex: none;
	text-align: center;
	overflow: hidden;
	background: ${(p) => (p.$active ? "#d2d2d2" : "#e6e6e6")};
	color: ${(p) => (p.$active ? "#217346" : "#333")};
	border-bottom: 1px solid #c8c8c8;
	border-right: ${(p) => (p.$active ? "2px solid #217346" : "1px solid #9a9a9a")};
`;

const RowText = styled.span`
	display: inline-block;
	transform: scaleX(0.87);
`;

const NumText = styled.span`
	display: inline-block;
	transform: scaleX(0.87);
	transform-origin: right center;
`;

const HeadText = styled.span`
	display: inline-block;
	transform: scaleX(0.9);
	transform-origin: left center;
`;

const Cell = styled.div<{ $num?: boolean }>`
	position: relative;
	width: 80px;
	height: 23px;
	flex: none;
	padding: 0 3px;
	white-space: nowrap;
	overflow: ${(p) => (p.$num ? "visible" : "hidden")};
	text-align: ${(p) => (p.$num ? "right" : "left")};
	border-right: 1px solid #d4d4d4;
	border-bottom: 1px solid #d4d4d4;
`;

const TailCell = styled.div`
	flex: 1;
	border-bottom: 1px solid #d4d4d4;
`;

const Selection = styled.div`
	position: absolute;
	left: -2px;
	top: -2px;
	right: -2px;
	bottom: -1px;
	border: 2px solid #217346;
	z-index: 2;
`;

const FillHandle = styled.i`
	position: absolute;
	right: -3px;
	bottom: -3px;
	width: 6px;
	height: 6px;
	background: #217346;
	outline: 1px solid #fff;
`;

const VScroll = styled.div`
	width: 19px;
	margin-left: 4px;
	padding-top: 2px;
	display: flex;
	flex-direction: column;
`;

const ScrollButton = styled.div`
	height: 19px;
	flex: none;
	background: #fff;
	border: 1px solid #9a9a9a;
	display: flex;
	align-items: center;
	justify-content: center;
`;

const VThumb = styled.div`
	height: 24px;
	flex: none;
	background: #fff;
	border: 1px solid #9a9a9a;
	border-top: 0;
`;

const VTrack = styled.div`
	flex: 1;
	background: #f0f0f0;
`;

const BottomBar = styled.div`
	position: relative;
	flex: 1;
	display: flex;
	align-items: flex-start;
`;

const SheetNav = styled.div`
	width: 103px;
	height: 26px;
	padding: 9px 41px 0 27px;
	display: flex;
	justify-content: space-between;
`;

const SheetTab = styled.div`
	width: 96px;
	height: 25px;
	background: #fff;
	border: 1px solid #aaa;
	border-top: 0;
	border-bottom: 2px solid #217346;
	text-align: center;
	font: 17.500px/20px "Noto Sans", sans-serif;
	color: #217346;
`;

const AddSheet = styled.div`
	margin: 4px 0 0 33px;
	display: flex;
`;

const BarGrip = styled.div`
	margin: 7px 0 0 896px;
	width: 3px;
	display: flex;
	flex-direction: column;
	gap: 2px;
	i {
		width: 3px;
		height: 3px;
		background: #aaa;
	}
`;

const HScroll = styled.div`
	margin: 5px 0 0 15px;
	width: 727px;
	height: 19px;
	display: flex;
`;

const HButton = styled.div`
	width: 19px;
	flex: none;
	background: #fff;
	border: 1px solid #9a9a9a;
	display: flex;
	align-items: center;
	justify-content: center;
`;

const HThumb = styled.div`
	flex: 1;
	background: #fff;
	border: 1px solid #9a9a9a;
	border-left: 0;
	border-right: 0;
`;

const HTrack = styled.div`
	width: 31px;
	flex: none;
	background: #f0f0f0;
	border-top: 1px solid #9a9a9a;
	border-bottom: 1px solid #9a9a9a;
`;

const Watermark = styled.div`
	position: absolute;
	left: 1735px;
	top: -1px;
	font: 19px/24px "Liberation Sans", "Noto Sans CJK SC", sans-serif;
	color: #8c8c8c;
	white-space: nowrap;
	text-shadow: 0 0 2px #fff, 0 0 2px #fff;
	letter-spacing: -0.2px;
`;
